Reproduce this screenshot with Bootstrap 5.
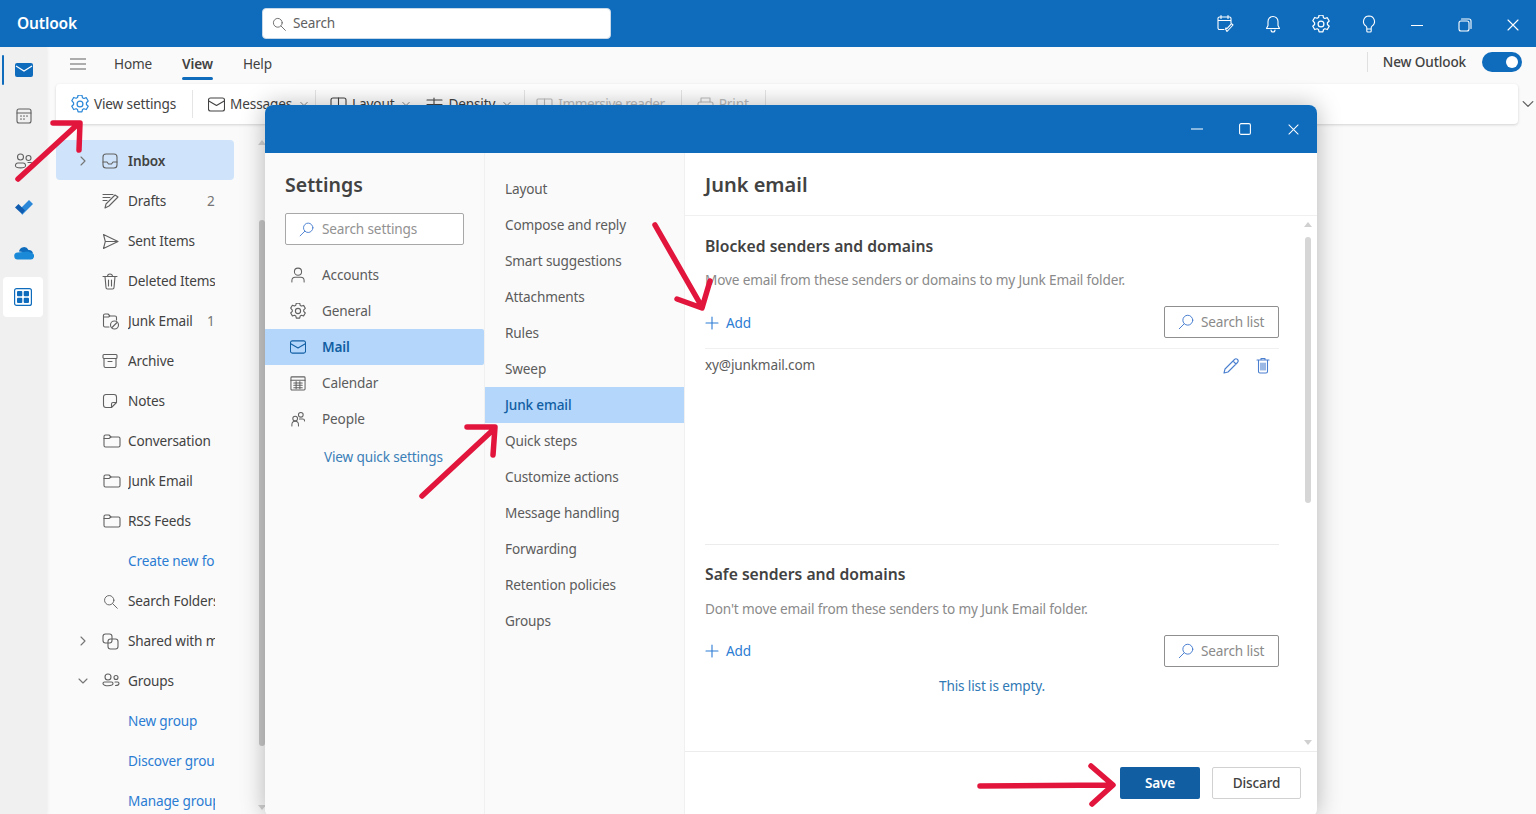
<!DOCTYPE html>
<html lang="en">
<head>
<meta charset="utf-8">
<title>Outlook</title>
<link href="https://cdn.jsdelivr.net/npm/bootstrap@5.3.0/dist/css/bootstrap.min.css" rel="stylesheet">
<style>
html,body{height:100%;overflow:hidden}
body{font-family:"Noto Sans","Open Sans","Liberation Sans",sans-serif;font-size:13.6px;color:#424242;background:#fafafa;letter-spacing:-.15px;position:relative}
svg{display:block;flex:none}
.ic{fill:none;stroke:currentColor;stroke-width:1.1;stroke-linecap:round;stroke-linejoin:round}
.icblue{color:#4a7fd0}
.gearblue{color:#2b88d8}
.topbar{height:47px;background:#0f6cbd;color:#fff}
.brand{width:262px;padding-left:17px;font-size:15.5px;font-weight:600}
.topsearch{width:349px;height:31px;background:#fff;border-radius:4px;color:#616161;padding:0 0 0 8px;gap:6px;border:1px solid #c8d8e8}
.topbtn{width:48px;height:47px;color:#fff}
.wc{padding-top:3px}
.topbtns{margin-right:-1px}
.shell{height:767px}
.rail{width:47px;background:#f0f0f0;box-shadow:1px 0 3px rgba(0,0,0,.05);position:relative}
.railbtn{height:46px;color:#616161;position:relative}
.railbtn.on::before{content:"";position:absolute;left:2px;top:8px;width:2px;height:30px;background:#0f6cbd;border-radius:1px}
.railstore{width:40px;height:40px;margin:0 0 0 3px;background:#fff;border-radius:4px}
.workarea{min-width:0}
.tabrow{height:37px;padding:0 0 3px 23px}
.burger{width:16px;margin-right:28px;color:#616161}
.tab{margin-right:30px;position:relative;line-height:20px;color:#424242}
.tab.on{font-weight:600}
.tab.on::after{content:"";position:absolute;left:0;right:0;bottom:-6px;height:3px;background:#0f6cbd;border-radius:2px}
.newol{margin-left:auto;padding-right:14px;height:20px;align-self:flex-start;margin-top:5px}
.newol .vr-line{width:1px;height:20px;background:#e0e0e0;margin-right:15px}
.switch{width:40px;height:20px;background:#0f6cbd;border-radius:10px;margin-left:16px;position:relative}
.switch::after{content:"";position:absolute;right:4px;top:4px;width:12px;height:12px;border-radius:50%;background:#fff}
.ribbonwrap{padding:0 0 0 9px;height:40px}
.ribbon{width:1462px;height:40px;background:#fff;border-radius:4px;box-shadow:0 1px 3px rgba(0,0,0,.16);padding:0 0 0 15px;color:#424242}
.rb{gap:5px;height:40px;position:relative}
.rbsep{width:1px;height:28px;background:#e5e5e5}
.rbdis{color:#bdbdbd}
.tight{letter-spacing:-.45px}
.chev{margin-left:3px;color:#757575}
.sl16{margin-left:16px}.sr16{margin-right:16px}.sl8{margin-left:7px}.sr14{margin-right:14px}.sl13{margin-left:16px}.sl10{margin-left:13px}.sr12{margin-right:11px}.sr15{margin-right:15px}
.ribchev{width:18px;margin-left:0;color:#616161}
.folders{width:218px;padding:16px 0 0 9px;position:relative;overflow:hidden;height:690px}
.fitem{height:40px;width:178px;padding-top:2px;color:#424242;border-radius:4px;position:relative}
.fitem.sel{background:#cfe4fa;font-weight:600}
.fexp{width:24px;margin-left:22px;color:#757575}
.ficon{width:24px;margin-right:2px;color:#616161}
.ftext{width:87px;overflow:hidden;white-space:nowrap}
.fcount{position:absolute;left:151px;top:11px;color:#757575}
.flink{color:#2b7cd3}
.pane-scroll{position:absolute;left:212px;top:96px;width:6px;height:526px;background:#c8c8c8;border-radius:3px}
.settingswin{position:absolute;left:265px;top:105px;width:1052px;height:712px;background:#fff;border-radius:8px;box-shadow:0 0 24px rgba(0,0,0,.28);overflow:hidden;display:flex;flex-direction:column}
.winbar{height:48px;background:#0f6cbd;color:#fff;flex:none}
.winbtn{width:48px;height:48px}
.colone{width:220px;background:#fafafa;border-right:1px solid #f0f0f0;padding-top:18px}
.settitle{font-size:19.5px;font-weight:600;line-height:28px;padding-left:20px;color:#424242;margin-bottom:14px;letter-spacing:0}
.setsearch{width:179px;height:32px;margin:0 0 12px 20px;background:#fff;border:1px solid #a8a8a8;border-radius:2px;padding-left:12px;gap:7px;color:#929292}
.setrow{height:36px;padding-left:24px;color:#5c5c5c;border-radius:0 2px 2px 0}
.setrow svg{width:16px;height:16px;margin:0 16.5px 0 .5px;color:#616161}
.setrow.sel{background:#b3d6fa;color:#115ea3;font-weight:600}
.setrow.sel svg{color:#115ea3}
.quick{padding-left:59px;margin-top:2px;height:36px;color:#3b7fb8;line-height:36px}
.coltwo{width:200px;background:#fafafa;padding-top:18px;border-right:1px solid #f0f0f0}
.subrow{height:36px;padding-left:20px;color:#5c5c5c;line-height:36px}
.subrow.sel{background:#b3d6fa;color:#115ea3;font-weight:500}
.colmain{min-width:0}
.maintitle{height:63px;padding-left:20px;font-size:20px;font-weight:600;color:#424242;border-bottom:1px solid #f0f0f0;line-height:64px;letter-spacing:0;flex:none}
.mainbody{height:535px;position:relative;padding:19px 38px 0 20px;flex:none;overflow:hidden}
.vbar{position:absolute;right:6px;top:21px;width:6px;height:266px;background:#d6d6d6;border-radius:3px}
.arrow-up,.arrow-dn{position:absolute;right:5px;width:0;height:0;border-left:4px solid transparent;border-right:4px solid transparent}
.arrow-up{top:6px;border-bottom:5px solid #d0d0d0}
.arrow-dn{bottom:6px;border-top:5px solid #d0d0d0}
.fold-up,.fold-dn{position:absolute;left:211px;width:0;height:0;border-left:4px solid transparent;border-right:4px solid transparent}
.fold-up{top:16px;border-bottom:5px solid #d0d0d0}
.fold-dn{top:681px;border-top:5px solid #d0d0d0}
.secthead{font-size:15.7px;font-weight:600;color:#424242;line-height:22px;letter-spacing:0}
.sectnote{color:#8a8a8a;line-height:20px}
.m13{margin-bottom:13px}.m16{margin-bottom:16px}.m14t{margin-top:14px}.m10{margin-bottom:10px}.m9{margin-bottom:9px}
.addrow{height:32px}
.addlink{gap:7px;color:#2b7cd3}
.addlow{padding-top:2px}
.searchlist{width:115px;height:32px;border:1px solid #8f8f8f;border-radius:2px;background:#fff;color:#8a8a8a;gap:6px;padding-left:12px}
.entry{height:34px;border-top:1px solid #f0f0f0;color:#5c5c5c}
.entrytools{gap:16px;color:#4a7fd0;margin-right:9px}
.rule{height:1px;background:#ececec;margin:162px 0 18px}
.emptynote{color:#2f79b5;text-align:center;line-height:20px}
.mainfoot{height:62px;border-top:1px solid #ececec;padding:15px 16px 0 0;gap:12px;flex:none}
.btnsave{width:80px;height:32px;background:#115ea3;color:#fff;border:0;border-radius:2px;font-weight:600;font-size:13.6px;letter-spacing:-.15px}
.btndiscard{width:89px;height:32px;background:#fff;color:#424242;border:1px solid #d1d1d1;border-radius:2px;font-weight:500;font-size:13.6px;letter-spacing:-.15px}
.annot{position:absolute;left:0;top:0;width:1536px;height:814px;pointer-events:none}
</style>
</head>
<body>
<svg width="0" height="0" class="position-absolute">
<defs>
<symbol id="gear" viewBox="2 2 16 16"><path d="M8.300 2.200h3.400l.5 2.200 1.300.7 2.100-.7 1.700 2.900-1.600 1.600v1.500l1.600 1.600-1.700 2.900-2.100-.7-1.300.7-.5 2.200H8.300l-.5-2.200-1.300-.7-2.100.7-1.700-2.900 1.600-1.600V9.100L2.700 7.100l1.700-2.900 2.100.7 1.300-.7z"/><circle cx="10" cy="10" r="2.600"/></symbol>
<symbol id="mag" viewBox="0 0 20 20"><circle cx="8.500" cy="8.500" r="5.500"/><path d="M12.600 12.600 18 18"/></symbol>
<symbol id="magl" viewBox="0 0 20 20"><circle cx="12" cy="8" r="5.500"/><path d="M8 12 2.500 17.500"/></symbol>
<symbol id="mail" viewBox="1.500 2 17 16"><rect x="2" y="3.500" width="16" height="13" rx="2"/><path d="m2.300 6.500 7.700 4.500 7.700-4.500"/></symbol>
<symbol id="folder" viewBox="0 0 20 20"><path d="M2 5.500A1.500 1.500 0 0 1 3.500 4h3.500l2 2h7.500A1.500 1.500 0 0 1 18 7.500v7a1.500 1.500 0 0 1-1.500 1.500h-13A1.500 1.500 0 0 1 2 14.500z"/><path d="M2 7.500h5l2-1.500"/></symbol>
<symbol id="chr" viewBox="0 0 10 10"><path d="m3 1 4 4-4 4"/></symbol>
<symbol id="chd" viewBox="0 0 10 10"><path d="m1 3 4 4 4-4"/></symbol>
<symbol id="x" viewBox="0 0 12 12"><path d="m1 1 10 10M11 1 1 11"/></symbol>
<symbol id="plus" viewBox="0 0 14 14"><path d="M7 1v12M1 7h12"/></symbol>
</defs>
</svg>

<header class="topbar d-flex align-items-center">
  <div class="brand">Outlook</div>
  <div class="topsearch d-flex align-items-center"><svg width="16" height="16" class="ic"><use href="#mag"/></svg><span>Search</span></div>
  <div class="topbtns d-flex ms-auto">
    <div class="topbtn d-flex align-items-center justify-content-center"><svg width="20" height="20" viewBox="0 0 20 20" class="ic"><path d="M9 15.500H4.500A1.500 1.500 0 0 1 3 14V4.500A1.500 1.500 0 0 1 4.500 3h10A1.500 1.500 0 0 1 16 4.500V9M3 6.500h13M6 1.500v3M13 1.500v3"/><path d="m10.500 15 1.500 2.500 6-6.500-1.500-1.300-4.500 5-1-.8z"/></svg></div>
    <div class="topbtn d-flex align-items-center justify-content-center"><svg width="20" height="20" viewBox="0 0 20 20" class="ic"><path d="M10 2.500a5 5 0 0 0-5 5v4L3.500 14.500h13L15 11.500v-4a5 5 0 0 0-5-5zM8 16a2 2 0 0 0 4 0"/></svg></div>
    <div class="topbtn d-flex align-items-center justify-content-center"><svg width="18" height="18" class="ic"><use href="#gear"/></svg></div>
    <div class="topbtn d-flex align-items-center justify-content-center"><svg width="20" height="20" viewBox="0 0 20 20" class="ic"><path d="M10 2a5.500 5.500 0 0 0-3 10.100c.6.500.8 1 .8 1.700V17a1 1 0 0 0 1 1h2.400a1 1 0 0 0 1-1v-3.200c0-.7.200-1.200.8-1.700A5.500 5.500 0 0 0 10 2zM8 15h4"/></svg></div>
    <div class="topbtn wc d-flex align-items-center justify-content-center"><svg width="12" height="12" viewBox="0 0 12 12" class="ic"><path d="M0 6.500h12"/></svg></div>
    <div class="topbtn wc d-flex align-items-center justify-content-center"><svg width="14" height="14" viewBox="0 0 14 14" class="ic"><rect x="1" y="3" width="10" height="10" rx="2"/><path d="M3.500 1H11a2 2 0 0 1 2 2v7.500"/></svg></div>
    <div class="topbtn wc d-flex align-items-center justify-content-center"><svg width="12" height="12" class="ic"><use href="#x"/></svg></div>
  </div>
</header>

<div class="shell d-flex">
  <nav class="rail d-flex flex-column flex-none">
    <div class="railbtn on d-flex align-items-center justify-content-center"><svg width="18" height="14" viewBox="0 0 18 14"><rect width="18" height="14" rx="2" fill="#0f6cbd"/><path d="m1 3 8 5 8-5" fill="none" stroke="#fff" stroke-width="1.200"/></svg></div>
    <div class="railbtn d-flex align-items-center justify-content-center"><svg width="16" height="16" viewBox="0 0 16 16" class="ic"><rect x="1" y="1" width="14" height="14" rx="2"/><path d="M1 5h14M4.500 8h1M7.500 8h1M10.500 8h1M4.500 11h1M7.500 11h1"/></svg></div>
    <div class="railbtn d-flex align-items-center justify-content-center"><svg width="20" height="18" viewBox="0 0 20 18" class="ic"><circle cx="6.500" cy="4" r="3"/><circle cx="14.500" cy="5" r="2.500"/><path d="M1.500 13a2.500 2.500 0 0 1 2.500-3h5a2.500 2.500 0 0 1 2.500 3c-.5 2.500-9.500 2.500-10 0zM14 9.500h2.500a2 2 0 0 1 2 2.500c-.3 1.300-2 1.800-4 1.700"/></svg></div>
    <div class="railbtn d-flex align-items-center justify-content-center"><svg width="20" height="16" viewBox="0 1 20 16"><path d="m7 9 8-8 4 4L8 16z" fill="#2b88d8"/><path d="M1 8.500 4.500 5 11 11.500 8 15z" fill="#0f5cb0"/></svg></div>
    <div class="railbtn d-flex align-items-center justify-content-center"><svg width="20" height="14" viewBox="0 1.500 20 14"><path d="M5 6a5 5 0 0 1 9.500-1.500A4 4 0 0 1 19 8z" fill="#0f6cbd"/><path d="M4 14a3.500 3.500 0 0 1-.5-7L14 6l5 2a3.500 3.500 0 0 1-2 6z" fill="#1a8ad8"/></svg></div>
    <div class="railstore d-flex align-items-center justify-content-center"><svg width="18" height="18" viewBox="0 0 18 18"><rect x=".6" y=".6" width="16.800" height="16.800" rx="2" fill="none" stroke="#0f6cbd" stroke-width="1.200"/><rect x="3" y="3" width="5.300" height="5.300" rx="1" fill="#0f6cbd"/><rect x="9.700" y="3" width="5.300" height="5.300" rx="1" fill="#0f6cbd"/><rect x="3" y="9.700" width="5.300" height="5.300" rx="1" fill="#0f6cbd"/><rect x="9.700" y="9.700" width="5.300" height="5.300" rx="1" fill="#0f6cbd"/></svg></div>
  </nav>

  <main class="workarea flex-grow-1 d-flex flex-column">
    <div class="tabrow d-flex align-items-center">
      <div class="burger"><svg width="16" height="12" viewBox="0 0 16 12" class="ic"><path d="M0 1h16M0 6h16M0 11h16"/></svg></div>
      <span class="tab">Home</span><span class="tab on">View</span><span class="tab">Help</span>
      <div class="newol d-flex align-items-center"><div class="vr-line"></div><span class="fw-medium">New Outlook</span><div class="switch"></div></div>
    </div>
    <div class="ribbonwrap d-flex">
      <div class="ribbon d-flex align-items-center">
        <div class="rb d-flex align-items-center"><svg width="18" height="18" class="ic gearblue"><use href="#gear"/></svg><span>View settings</span></div>
        <div class="rbsep sl16 sr15"></div>
        <div class="rb d-flex align-items-center"><svg width="17" height="17" class="ic"><use href="#mail"/></svg><span>Messages</span><svg width="8" height="8" class="ic chev"><use href="#chd"/></svg></div>
        <div class="rbsep sl8 sr14"></div>
        <div class="rb d-flex align-items-center"><svg width="17" height="17" viewBox="0 0 17 17" class="ic"><rect x="1" y="2" width="15" height="13" rx="2"/><path d="M8.500 2v13"/></svg><span>Layout</span><svg width="8" height="8" class="ic chev"><use href="#chd"/></svg></div>
        <div class="rb d-flex align-items-center sl13"><svg width="17" height="17" viewBox="0 0 17 17" class="ic"><path d="M1 4h6M1 8.500h6M1 13h6M9 4h7M9 8.500h7M9 13h7M8 2v13"/></svg><span>Density</span><svg width="8" height="8" class="ic chev"><use href="#chd"/></svg></div>
        <div class="rbsep sl10 sr12"></div>
        <div class="rb rbdis d-flex align-items-center"><svg width="17" height="17" viewBox="0 0 17 17" class="ic"><rect x="1" y="3" width="15" height="12" rx="1"/><path d="M8.500 3v12"/></svg><span class="tight">Immersive reader</span></div>
        <div class="rbsep sl16 sr15"></div>
        <div class="rb rbdis d-flex align-items-center"><svg width="17" height="17" viewBox="0 0 17 17" class="ic"><rect x="1" y="6" width="15" height="8" rx="2"/><path d="M4 6V2h9v4"/></svg><span>Print</span></div>
        <div class="rbsep sl16 sr16"></div>
        <div class="rb d-flex align-items-center fw-bold">...</div>
      </div>
      <div class="ribchev d-flex align-items-center"><svg width="12" height="12" class="ic ms-1"><use href="#chd"/></svg></div>
    </div>

    <div class="folders">
      <div class="fitem sel d-flex align-items-center"><div class="fexp"><svg width="10" height="10" class="ic"><use href="#chr"/></svg></div><div class="ficon"><svg width="16" height="16" viewBox="0 0 16 16" class="ic"><rect x="1" y="1" width="14" height="14" rx="3"/><path d="M1 9h4l1.500 2h3L11 9h4"/></svg></div><div class="ftext">Inbox</div></div>
      <div class="fitem d-flex align-items-center"><div class="fexp"></div><div class="ficon"><svg width="18" height="18" viewBox="0 0 18 18" class="ic"><path d="M1 2.500h10M1 5.500h7M1 8.500h4M3 16l1-4 9-9 3 2-9 9z"/></svg></div><div class="ftext">Drafts</div><span class="fcount">2</span></div>
      <div class="fitem d-flex align-items-center"><div class="fexp"></div><div class="ficon"><svg width="17" height="17" viewBox="0 0 17 17" class="ic"><path d="M1.500 1.500 16 8.500 1.500 15.500l1.800-7zM3.300 8.500H16"/></svg></div><div class="ftext">Sent Items</div></div>
      <div class="fitem d-flex align-items-center"><div class="fexp"></div><div class="ficon"><svg width="16" height="17" viewBox="0 0 16 17" class="ic"><path d="M1 3.500h14M5.500 3.500a2.500 2.500 0 0 1 5 0M3 3.500l1 11a1.500 1.500 0 0 0 1.500 1.500h5a1.500 1.500 0 0 0 1.500-1.500l1-11M6.500 7v6M9.500 7v6"/></svg></div><div class="ftext">Deleted Items</div></div>
      <div class="fitem d-flex align-items-center"><div class="fexp"></div><div class="ficon"><svg width="18" height="18" viewBox="0 0 18 18" class="ic"><path d="M7 15H3a1.500 1.500 0 0 1-1.500-1.500v-10A1.500 1.500 0 0 1 3 2h3l2 2h5a1.500 1.500 0 0 1 1.500 1.500V8M1.500 5h5l1.500-1"/><circle cx="12.500" cy="13" r="4"/><path d="m10 15.500 5-5"/></svg></div><div class="ftext">Junk Email</div><span class="fcount">1</span></div>
      <div class="fitem d-flex align-items-center"><div class="fexp"></div><div class="ficon"><svg width="16" height="16" viewBox="0 0 16 16" class="ic"><rect x="1" y="1.500" width="14" height="4" rx="1"/><path d="M2 5.500V13a1.500 1.500 0 0 0 1.500 1.500h9A1.500 1.500 0 0 0 14 13V5.500M6 8.500h4"/></svg></div><div class="ftext">Archive</div></div>
      <div class="fitem d-flex align-items-center"><div class="fexp"></div><div class="ficon"><svg width="16" height="16" viewBox="0 0 16 16" class="ic"><path d="M9.500 14.500H4A2.500 2.500 0 0 1 1.500 12V4A2.500 2.500 0 0 1 4 1.500h8A2.500 2.500 0 0 1 14.500 4v5.500zM9.500 14.500V11A1.500 1.500 0 0 1 11 9.500h3.500"/></svg></div><div class="ftext">Notes</div></div>
      <div class="fitem d-flex align-items-center"><div class="fexp"></div><div class="ficon"><svg width="20" height="20" class="ic"><use href="#folder"/></svg></div><div class="ftext">Conversation History</div></div>
      <div class="fitem d-flex align-items-center"><div class="fexp"></div><div class="ficon"><svg width="20" height="20" class="ic"><use href="#folder"/></svg></div><div class="ftext">Junk Email</div></div>
      <div class="fitem d-flex align-items-center"><div class="fexp"></div><div class="ficon"><svg width="20" height="20" class="ic"><use href="#folder"/></svg></div><div class="ftext">RSS Feeds</div></div>
      <div class="fitem d-flex align-items-center"><div class="fexp"></div><div class="ficon"></div><div class="ftext flink">Create new folder</div></div>
      <div class="fitem d-flex align-items-center"><div class="fexp"></div><div class="ficon"><svg width="17" height="17" class="ic"><use href="#mag"/></svg></div><div class="ftext">Search Folders</div></div>
      <div class="fitem d-flex align-items-center"><div class="fexp"><svg width="10" height="10" class="ic"><use href="#chr"/></svg></div><div class="ficon"><svg width="17" height="17" viewBox="0 0 17 17" class="ic"><rect x="1" y="1" width="9" height="9" rx="2.500"/><rect x="6" y="6" width="10" height="10" rx="2.500"/></svg></div><div class="ftext">Shared with me</div></div>
      <div class="fitem d-flex align-items-center"><div class="fexp"><svg width="10" height="10" class="ic"><use href="#chd"/></svg></div><div class="ficon"><svg width="18" height="16" viewBox="0 0 18 16" class="ic"><circle cx="6" cy="4" r="3"/><circle cx="14" cy="4.500" r="2"/><path d="M1 10.500A1.500 1.500 0 0 1 2.500 9h7a1.500 1.500 0 0 1 1.500 1.500c0 3-10 3-10 0zM13 9h2.500a1.500 1.500 0 0 1 1.500 1.500c0 1.500-1.800 2-3.500 2"/></svg></div><div class="ftext">Groups</div></div>
      <div class="fitem d-flex align-items-center"><div class="fexp"></div><div class="ficon"></div><div class="ftext flink">New group</div></div>
      <div class="fitem d-flex align-items-center"><div class="fexp"></div><div class="ficon"></div><div class="ftext flink">Discover groups</div></div>
      <div class="fitem d-flex align-items-center"><div class="fexp"></div><div class="ficon"></div><div class="ftext flink">Manage groups</div></div>
      <div class="fold-up"></div><div class="pane-scroll"></div><div class="fold-dn"></div>
    </div>
  </main>
</div>

<section class="settingswin">
  <div class="winbar d-flex align-items-center justify-content-end">
    <div class="winbtn d-flex align-items-center justify-content-center"><svg width="12" height="12" viewBox="0 0 12 12" class="ic"><path d="M0 6h12"/></svg></div>
    <div class="winbtn d-flex align-items-center justify-content-center"><svg width="12" height="12" viewBox="0 0 12 12" class="ic"><rect x=".6" y=".6" width="10.800" height="10.800" rx="1.500"/></svg></div>
    <div class="winbtn d-flex align-items-center justify-content-center"><svg width="11" height="11" class="ic"><use href="#x"/></svg></div>
  </div>
  <div class="d-flex flex-grow-1">
    <div class="colone flex-none">
      <div class="settitle">Settings</div>
      <div class="setsearch d-flex align-items-center"><svg width="17" height="17" class="ic icblue"><use href="#magl"/></svg><span>Search settings</span></div>
      <div class="setrow d-flex align-items-center"><svg viewBox="0 0 17 17" class="ic"><circle cx="8.500" cy="5" r="3.800"/><path d="M2 16v-1.500A3.500 3.500 0 0 1 5.500 11h6a3.500 3.500 0 0 1 3.500 3.500V16"/></svg><span>Accounts</span></div>
      <div class="setrow d-flex align-items-center"><svg class="ic"><use href="#gear"/></svg><span>General</span></div>
      <div class="setrow sel d-flex align-items-center"><svg class="ic"><use href="#mail"/></svg><span>Mail</span></div>
      <div class="setrow d-flex align-items-center"><svg viewBox="0 0 17 17" class="ic"><rect x="1" y="2" width="15" height="14" rx="1"/><path d="M1 5.500h15M4 8.500h9M4 11h9M4 13.500h9M6.500 7v7.500M10.500 7v7.500"/></svg><span>Calendar</span></div>
      <div class="setrow d-flex align-items-center"><svg viewBox="0 0 17 17" class="ic"><circle cx="11.500" cy="4" r="2.500"/><circle cx="5.500" cy="8" r="2.500"/><path d="M2 16v-1.500a3 3 0 0 1 7 0V16M10 8.500h3.500a2 2 0 0 1 2 2"/></svg><span>People</span></div>
      <div class="quick">View quick settings</div>
    </div>
    <div class="coltwo flex-none">
      <div class="subrow">Layout</div><div class="subrow">Compose and reply</div><div class="subrow">Smart suggestions</div><div class="subrow">Attachments</div><div class="subrow">Rules</div><div class="subrow">Sweep</div><div class="subrow sel">Junk email</div><div class="subrow">Quick steps</div><div class="subrow">Customize actions</div><div class="subrow">Message handling</div><div class="subrow">Forwarding</div><div class="subrow">Retention policies</div><div class="subrow">Groups</div>
    </div>
    <div class="colmain flex-grow-1 d-flex flex-column">
      <div class="maintitle">Junk email</div>
      <div class="mainbody">
        <div class="arrow-up"></div><div class="vbar"></div><div class="arrow-dn"></div>
        <div class="secthead m13">Blocked senders and domains</div>
        <div class="sectnote m16">Move email from these senders or domains to my Junk Email folder.</div>
        <div class="addrow d-flex align-items-center justify-content-between m10">
          <div class="addlink addlow d-flex align-items-center"><svg width="14" height="14" class="ic"><use href="#plus"/></svg><span>Add</span></div>
          <div class="searchlist d-flex align-items-center"><svg width="18" height="18" class="ic icblue"><use href="#magl"/></svg><span>Search list</span></div>
        </div>
        <div class="entry d-flex align-items-center justify-content-between">
          <span>xy@junkmail.com</span>
          <div class="entrytools d-flex align-items-center">
            <svg width="18" height="18" viewBox="0 0 18 18" class="ic"><path d="m2 16 1-4L12.500 2.500a2 2 0 0 1 3 3L6 15z M11 4l3 3"/></svg>
            <svg width="14" height="17" viewBox="0 0 14 17" class="ic"><path d="M1 3h12M5 3V1.500h4V3M2.500 3v11.500a1.500 1.500 0 0 0 1.500 1.500h6a1.500 1.500 0 0 0 1.500-1.500V3M5 6v7M7 6v7M9 6v7"/></svg>
          </div>
        </div>
        <div class="rule"></div>
        <div class="secthead">Safe senders and domains</div>
        <div class="sectnote m14t m16">Don't move email from these senders to my Junk Email folder.</div>
        <div class="addrow d-flex align-items-center justify-content-between m9">
          <div class="addlink d-flex align-items-center"><svg width="14" height="14" class="ic"><use href="#plus"/></svg><span>Add</span></div>
          <div class="searchlist d-flex align-items-center"><svg width="18" height="18" class="ic icblue"><use href="#magl"/></svg><span>Search list</span></div>
        </div>
        <div class="emptynote">This list is empty.</div>
      </div>
      <div class="mainfoot d-flex justify-content-end align-items-start">
        <button class="btnsave" type="button">Save</button>
        <button class="btndiscard" type="button">Discard</button>
      </div>
    </div>
  </div>
</section>

<svg class="annot" viewBox="0 0 1536 814" fill="none" stroke="#e2163c" stroke-width="5.500" stroke-linecap="round" stroke-linejoin="round">
  <path d="M18 179 78 124M53 123h27l-1 27"/>
  <path d="M655 225 702 307M677 299l25 9 8-27"/>
  <path d="M422 496 494 429M467 427h28l-2 28"/>
  <path d="M980 786 1111 785M1091 766l22 19-21 19"/>
</svg>
</body>
</html>
